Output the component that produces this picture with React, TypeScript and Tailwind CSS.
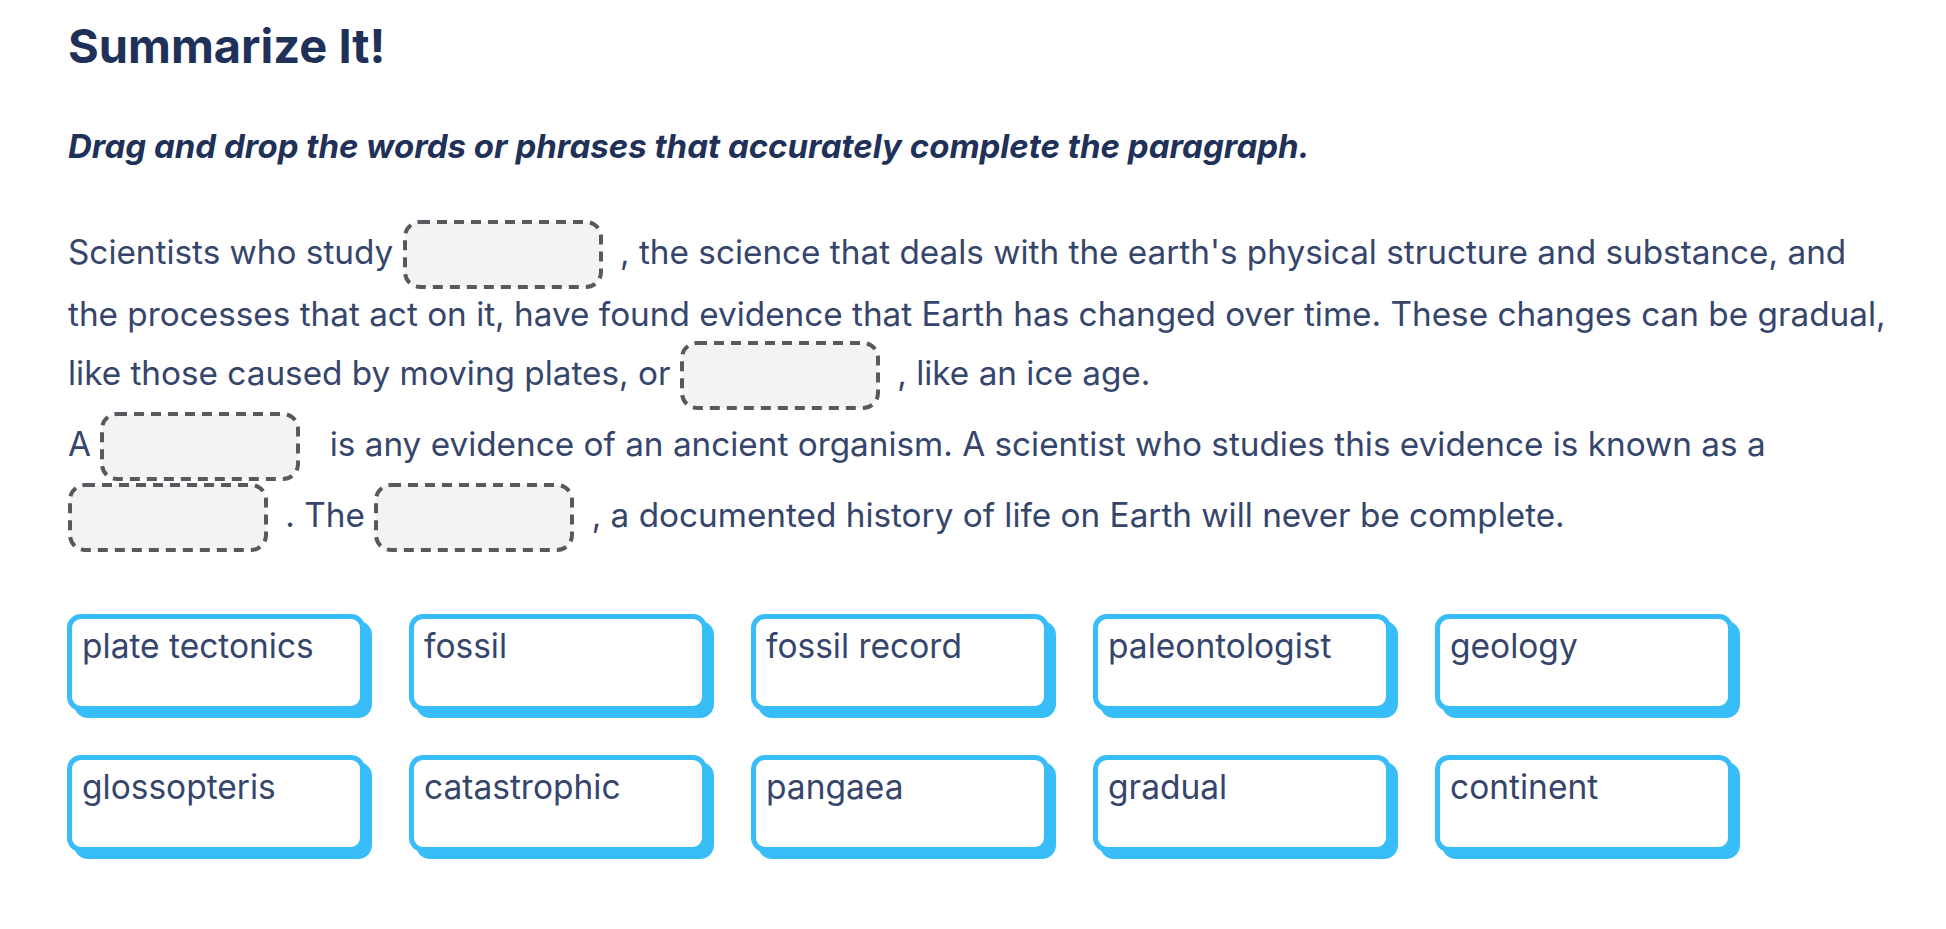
import React from "react";

const wordRows = [
  ["plate tectonics", "fossil", "fossil record", "paleontologist", "geology"],
  ["glossopteris", "catastrophic", "pangaea", "gradual", "continent"],
];

// drop target: dashed rounded box, drawn as svg so the dash length matches
const Blank = () => (
  <span className="inline-block align-middle w-[200px] h-[69px] my-px mr-2">
    <svg width="200" height="69" viewBox="0 0 200 69" className="block">
      <rect
        x="2"
        y="2"
        width="196"
        height="65"
        rx="15"
        fill="#f3f3f3"
        stroke="#58585f"
        strokeWidth="4"
        strokeDasharray="10 7"
      />
    </svg>
  </span>
);

const WordCard = ({ word }: { word: string }) => (
  <div className="h-[97px] rounded-[14px] border-[5px] border-[#38bdf8] bg-white shadow-[7px_7px_0_0_#38bdf8] px-[10px] pt-[2px] text-[33.5px] leading-[1.5] text-[#36456b] cursor-grab">
    {word}
  </div>
);

function App() {
  return (
    <main className="min-h-screen bg-white pl-[68px] pr-[20px] pt-[22px] font-['Inter',sans-serif]">
      <h1 className="text-[47px] leading-none font-bold text-[#1f3158]">Summarize It!</h1>

      <p className="mt-[61px] text-[33px] leading-none font-bold italic text-[#1f3158]">
        Drag and drop the words or phrases that accurately complete the paragraph.
      </p>

      <p className="mt-[56px] text-[33.3px] leading-[1.5] text-[#36456b] whitespace-nowrap">
        Scientists who study <Blank /> , the science that deals with the earth's physical structure and substance, and
        <br />
        the processes that act on it, have found evidence that Earth has changed over time. These changes can be gradual,
        <br />
        like those caused by moving plates, or <Blank /> , like an ice age.
        <br />
        A <Blank /> <span className="ml-[12px]">is any evidence of an ancient organism. A scientist who studies this evidence is known as a</span>
        <br />
        <Blank /> . The <Blank /> , a documented history of life on Earth will never be complete.
      </p>

      <div className="mt-[61px] -ml-px grid grid-cols-[repeat(5,298px)] gap-x-[44px] gap-y-[44px]">
        {wordRows.flat().map((w) => (
          <WordCard key={w} word={w} />
        ))}
      </div>
    </main>
  );
}

export default App;
